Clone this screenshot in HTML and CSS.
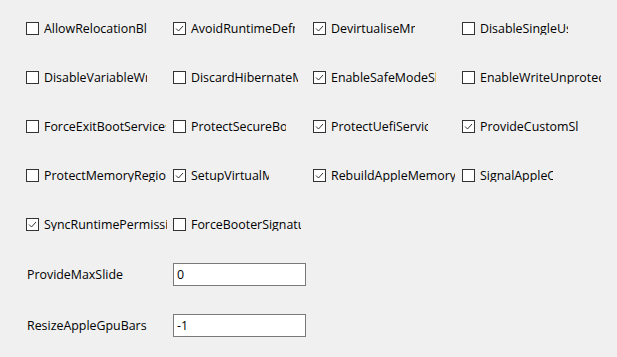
FILE: index.html
```html
<!DOCTYPE html>
<html lang="en">
<head>
    <meta charset="UTF-8">
    <title>Booter Quirks</title>
    <link rel="stylesheet" href="styles.css">
</head>
<body>

    <!-- Opcoes (checkboxes) -->
    <div class="checks">
        <label class="cb w121"><span class="box"></span><span class="txt">AllowRelocationBlock</span></label>
        <label class="cb w122"><span class="box on"><svg viewBox="0 0 11 11"><polyline points="2,5.5 4.5,8 9,3"/></svg></span><span class="txt">AvoidRuntimeDefrag</span></label>
        <label class="cb w102"><span class="box on"><svg viewBox="0 0 11 11"><polyline points="2,5.5 4.5,8 9,3"/></svg></span><span class="txt">DevirtualiseMmio</span></label>
        <label class="cb w106"><span class="box"></span><span class="txt">DisableSingleUser</span></label>

        <label class="cb w121"><span class="box"></span><span class="txt">DisableVariableWrite</span></label>
        <label class="cb w125"><span class="box"></span><span class="txt">DiscardHibernateMap</span></label>
        <label class="cb w123"><span class="box on"><svg viewBox="0 0 11 11"><polyline points="2,5.5 4.5,8 9,3"/></svg></span><span class="txt">EnableSafeModeSlide</span></label>
        <label class="cb w139"><span class="box"></span><span class="txt">EnableWriteUnprotector</span></label>

        <label class="cb w140"><span class="box"></span><span class="txt">ForceExitBootServices</span></label>
        <label class="cb w113"><span class="box"></span><span class="txt">ProtectSecureBoot</span></label>
        <label class="cb w115"><span class="box on"><svg viewBox="0 0 11 11"><polyline points="2,5.5 4.5,8 9,3"/></svg></span><span class="txt">ProtectUefiServices</span></label>
        <label class="cb w116"><span class="box on"><svg viewBox="0 0 11 11"><polyline points="2,5.5 4.5,8 9,3"/></svg></span><span class="txt">ProvideCustomSlide</span></label>

        <label class="cb w140"><span class="box"></span><span class="txt">ProtectMemoryRegions</span></label>
        <label class="cb w96"><span class="box on"><svg viewBox="0 0 11 11"><polyline points="2,5.5 4.5,8 9,3"/></svg></span><span class="txt">SetupVirtualMap</span></label>
        <label class="cb w142"><span class="box on"><svg viewBox="0 0 11 11"><polyline points="2,5.5 4.5,8 9,3"/></svg></span><span class="txt">RebuildAppleMemoryMap</span></label>
        <label class="cb w91"><span class="box"></span><span class="txt">SignalAppleOS</span></label>

        <label class="cb w141"><span class="box on"><svg viewBox="0 0 11 11"><polyline points="2,5.5 4.5,8 9,3"/></svg></span><span class="txt">SyncRuntimePermissions</span></label>
        <label class="cb w128"><span class="box"></span><span class="txt">ForceBooterSignature</span></label>
    </div>

    <!-- Campos numericos -->
    <div class="fields">
        <div class="field">
            <span class="flabel">ProvideMaxSlide</span>
            <input class="num" type="text" value="0">
        </div>
        <div class="field">
            <span class="flabel">ResizeAppleGpuBars</span>
            <input class="num" type="text" value="-1">
        </div>
    </div>

</body>
</html>
```

FILE: styles.css
```css
/* Geral */
body {
    margin: 0;
    padding: 22px 0 0 26px;
    background-color: #f0f0f0;
    font-family: 'Open Sans', 'Noto Sans', sans-serif;
    font-size: 12.4px;
    color: #000;
    height: 100vh;
    box-sizing: border-box;
    overflow: hidden;
}

/* Grade de checkboxes */
.checks {
    display: grid;
    grid-template-columns: 147px 140px 149px 155px;
    grid-auto-rows: 13px;
    row-gap: 36px;
}

.cb {
    display: flex;
    align-items: center;
    height: 13px;
    overflow: hidden;
    white-space: nowrap;
}

.w91 { width: 91px; }
.w96 { width: 96px; }
.w102 { width: 102px; }
.w106 { width: 106px; }
.w113 { width: 113px; }
.w115 { width: 115px; }
.w116 { width: 116px; }
.w121 { width: 121px; }
.w122 { width: 122px; }
.w123 { width: 123px; }
.w125 { width: 125px; }
.w128 { width: 128px; }
.w139 { width: 139px; }
.w140 { width: 140px; }
.w141 { width: 141px; }
.w142 { width: 142px; }

.box {
    flex: none;
    width: 13px;
    height: 13px;
    box-sizing: border-box;
    border: 1px solid #333;
    background-color: #fff;
    margin-right: 5px;
}

.box svg {
    display: block;
    width: 11px;
    height: 11px;
}

.box polyline {
    fill: none;
    stroke: #333;
    stroke-width: 1;
}

.txt {
    line-height: 13px;
}

/* Campos */
.fields {
    margin-top: 32px;
    display: flex;
    flex-direction: column;
    gap: 28px;
}

.field {
    display: flex;
    align-items: center;
    height: 23px;
}

.flabel {
    width: 147px;
    padding-left: 1px;
    box-sizing: border-box;
}

.num {
    width: 133px;
    height: 23px;
    box-sizing: border-box;
    margin: 0;
    border: 1px solid #7a7a7a;
    background-color: #fff;
    padding: 0 3px;
    font-family: inherit;
    font-size: 12.4px;
    color: #000;
    outline: none;
}
```
